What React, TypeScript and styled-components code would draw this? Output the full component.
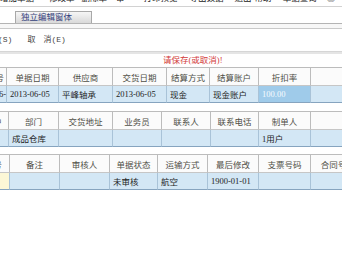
import React from 'react';
import styled, { createGlobalStyle } from 'styled-components';

const GlobalStyle = createGlobalStyle`
  html, body {
    margin: 0;
    padding: 0;
    background: #fff;
    overflow: hidden;
  }
  body {
    font-family: "Liberation Serif", "Noto Sans CJK SC", serif;
    font-size: 8.5px;
    color: #333;
  }
`;

const Page = styled.div`
  width: 342px;
  height: 255px;
  overflow: hidden;
  display: flex;
  flex-direction: column;
`;

/* top menu, cut off by the crop */
const MenuBar = styled.div`
  height: 7px;
  box-sizing: border-box;
  padding-bottom: 2px;
  display: flex;
  align-items: flex-end;
  overflow: hidden;
  border-bottom: 1px solid #d2d2d2;
`;

const MenuItem = styled.span<{ $left: number }>`
  margin-left: ${p => p.$left}px;
  line-height: 12px;
  color: #222;
  white-space: nowrap;
`;

const TabStrip = styled.div`
  height: 16px;
  box-sizing: border-box;
  padding: 4px 0 0 15px;
  display: flex;
`;

const Tab = styled.div`
  width: 77px;
  height: 12px;
  box-sizing: border-box;
  border: 1px solid #a8a8a8;
  border-bottom: none;
  background: linear-gradient(#f6f6f6, #d9d9d9);
  color: #33407a;
  padding-left: 5px;
  line-height: 11px;
`;

const Band = styled.div`
  height: 6px;
  box-sizing: border-box;
  border-top: 1px solid #b4b4b4;
  border-bottom: 1px solid #c9c9c9;
  background: #f7f7f7;
`;

const Toolbar = styled.div`
  height: 22px;
  display: flex;
  align-items: center;
  gap: 15px;
  padding-bottom: 3px;
  box-sizing: border-box;
`;

const ToolButton = styled.span<{ $shift?: number }>`
  margin-left: ${p => p.$shift || 0}px;
  font-size: 8px;
  color: #444;
  white-space: nowrap;
`;

const Key = styled.span`
  font-family: "Liberation Mono", monospace;
`;

const Divider = styled.div`
  height: 3px;
  background: #e5e5e5;
  border-top: 1px solid #d6d6d6;
  box-sizing: border-box;
`;

const Notice = styled.div`
  height: 13px;
  padding-left: 163px;
  color: #d23a3a;
  line-height: 12px;
`;

const Grid = styled.div<{ $cols: number[]; $gap: number }>`
  display: grid;
  grid-template-columns: ${p => p.$cols.map(c => c + 'px').join(' ')};
  width: max-content;
  margin-left: -10px;
  margin-bottom: ${p => p.$gap}px;
`;

const HeadCell = styled.div<{ $edge?: number }>`
  height: 19px;
  box-sizing: border-box;
  display: flex;
  align-items: center;
  justify-content: ${p => (p.$edge !== undefined ? 'flex-end' : 'center')};
  padding-right: ${p => p.$edge || 0}px;
  overflow: hidden;
  white-space: nowrap;
  background: #fbfbfb;
  border-top: 1px solid #bcbcbc;
  border-bottom: 1px solid #c6c6c6;
  border-right: 1px solid #bcbcbc;
  color: #4f4f47;
`;

const DataCell = styled.div<{ $tone?: 'focus' | 'note'; $edge?: boolean }>`
  height: 17px;
  box-sizing: border-box;
  display: flex;
  align-items: center;
  justify-content: ${p => (p.$edge ? 'flex-end' : 'flex-start')};
  padding-left: ${p => (p.$edge ? 0 : 3)}px;
  overflow: hidden;
  white-space: nowrap;
  background: ${p =>
    p.$tone === 'focus' ? '#9fcbea' : p.$tone === 'note' ? '#fcf7d6' : '#d3e7f5'};
  color: ${p => (p.$tone === 'focus' ? '#f7fbff' : '#1d1d1d')};
  border-right: 1px solid #a9c3d8;
  border-bottom: 1px solid #86a4bf;
`;

type Block = {
  cols: number[];
  gap: number;
  heads: string[];
  headEdge: number;
  cells: string[];
  tones?: Record<number, 'focus' | 'note'>;
};

const blocks: Block[] = [
  {
    cols: [17, 52, 54, 54, 43, 49, 52, 60],
    gap: 8,
    heads: ['单据编号', '单据日期', '供应商', '交货日期', '结算方式', '结算账户', '折扣率', ''],
    headEdge: 2,
    cells: ['2013-06-', '2013-06-05', '平峰轴承', '2013-06-05', '现金', '现金账户', '100.00', ''],
    tones: { 6: 'focus' },
  },
  {
    cols: [19, 50, 54, 49, 49, 48, 52, 60],
    gap: 7,
    heads: ['客户', '部门', '交货地址', '业务员', '联系人', '联系电话', '制单人', ''],
    headEdge: 6,
    cells: ['', '成品仓库', '', '', '', '', '1用户', ''],
  },
  {
    cols: [20, 50, 50, 48, 50, 51, 52, 46],
    gap: 0,
    heads: ['编号', '备注', '审核人', '单据状态', '运输方式', '最后修改', '支票号码', '合同号'],
    headEdge: 7,
    cells: ['', '', '', '未审核', '航空', '1900-01-01', '', ''],
    tones: { 0: 'note' },
  },
];

const menu = [
  { text: '增加单据', left: 0 },
  { text: '修改单', left: 15 },
  { text: '删除单', left: 7 },
  { text: '审', left: 9 },
  { text: '打印预览', left: 19 },
  { text: '导出数据', left: 12 },
  { text: '退出', left: 11 },
  { text: '帮助', left: 3 },
  { text: '单据查询', left: 11 },
  { text: '◎', left: 10 },
];

const App = () => {
  return (
    <Page>
      <GlobalStyle />
      <MenuBar>
        {menu.map((m, i) => (
          <MenuItem key={i} $left={m.left}>{m.text}</MenuItem>
        ))}
      </MenuBar>
      <TabStrip>
        <Tab>独立编辑窗体</Tab>
      </TabStrip>
      <Band />
      <Toolbar>
        <ToolButton $shift={-26}>保　存<Key>(S)</Key></ToolButton>
        <ToolButton>取　消<Key>(E)</Key></ToolButton>
      </Toolbar>
      <Divider />
      <Notice>请保存(或取消)!</Notice>
      {blocks.map((b, bi) => (
        <Grid key={bi} $cols={b.cols} $gap={b.gap}>
          {b.heads.map((h, i) => (
            <HeadCell key={'h' + i} $edge={i === 0 ? b.headEdge : undefined}>{h}</HeadCell>
          ))}
          {b.cells.map((c, i) => (
            <DataCell key={'d' + i} $edge={i === 0} $tone={b.tones?.[i]}>{c}</DataCell>
          ))}
        </Grid>
      ))}
    </Page>
  );
};

export default App;
